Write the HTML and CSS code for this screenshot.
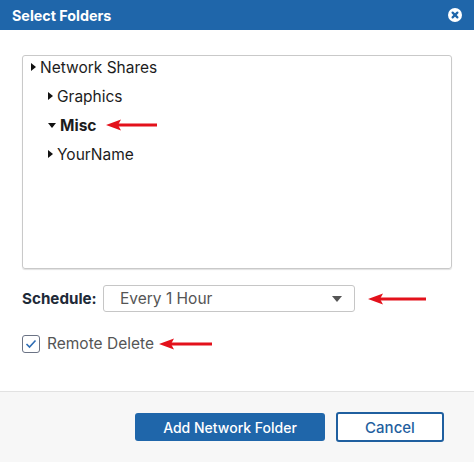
FILE: index.html
```html
<!DOCTYPE html>
<html lang="en">
<head>
    <meta charset="UTF-8">
    <title>Select Folders</title>
    <link rel="stylesheet" href="styles.css">
</head>
<body>
    <div class="dialog">
        <div class="dialog-header">
            <span class="dialog-title">Select Folders</span>
            <span class="close-btn">
                <svg width="14" height="14" viewBox="0 0 14 14">
                    <circle cx="7" cy="7" r="7" fill="#fff"/>
                    <path d="M4.6 4.6 L9.4 9.4 M9.4 4.6 L4.6 9.4" stroke="#1f66aa" stroke-width="2.2" stroke-linecap="round"/>
                </svg>
            </span>
        </div>

        <div class="dialog-body">
            <div class="tree">
                <div class="tree-row">
                    <span class="caret-right"></span>Network Shares
                </div>
                <div class="tree-children">
                    <div class="tree-row">
                        <span class="caret-right"></span>Graphics
                    </div>
                    <div class="tree-row open">
                        <span class="caret-down"></span>Misc
                        <svg class="arrow" width="52" height="12" viewBox="0 0 52 12">
                            <path d="M12 6 H51" stroke="#e3111b" stroke-width="3"/>
                            <path d="M0 6 L15 0.5 L12 6 L15 11.5 Z" fill="#e3111b"/>
                        </svg>
                    </div>
                    <div class="tree-row">
                        <span class="caret-right"></span>YourName
                    </div>
                </div>
            </div>

            <div class="schedule-row">
                <label class="schedule-label">Schedule:</label>
                <div class="select">
                    <span>Every 1 Hour</span>
                    <span class="select-caret"></span>
                </div>
                <svg class="arrow arrow-schedule" width="59" height="12" viewBox="0 0 59 12">
                    <path d="M12 6 H58" stroke="#e3111b" stroke-width="3"/>
                    <path d="M0 6 L15 0.5 L12 6 L15 11.5 Z" fill="#e3111b"/>
                </svg>
            </div>

            <div class="check-row">
                <span class="checkbox">
                    <svg width="12" height="10" viewBox="0 0 12 10">
                        <path d="M1.5 5 L4.5 8 L10.5 1.5" fill="none" stroke="#2e6db4" stroke-width="1.6"/>
                    </svg>
                </span>
                <span class="check-label">Remote Delete</span>
                <svg class="arrow arrow-check" width="54" height="12" viewBox="0 0 54 12">
                    <path d="M12 6 H53" stroke="#e3111b" stroke-width="3"/>
                    <path d="M0 6 L15 0.5 L12 6 L15 11.5 Z" fill="#e3111b"/>
                </svg>
            </div>
        </div>

        <div class="dialog-footer">
            <button class="btn btn-primary">Add Network Folder</button>
            <button class="btn btn-secondary">Cancel</button>
        </div>
    </div>
</body>
</html>
```

FILE: styles.css
```css
body {
    margin: 0;
    font-family: 'Inter', 'Liberation Sans', sans-serif;
    background-color: #fff;
}

.dialog {
    width: 474px;
    height: 462px;
    display: flex;
    flex-direction: column;
}

.dialog-header {
    height: 30px;
    background-color: #1f66aa;
    color: #fff;
    display: flex;
    align-items: center;
    justify-content: space-between;
    padding: 0 12px;
}

.dialog-title {
    font-size: 14.3px;
    font-weight: 700;
}

.close-btn svg {
    display: block;
}

.dialog-body {
    flex: 1;
    padding: 25px 22px 0 22px;
}

.tree {
    height: 214px;
    box-sizing: border-box;
    border: 1px solid #c9c9c9;
    border-radius: 3px;
    box-shadow: 0 1px 1px rgba(0, 0, 0, 0.12);
    padding: 0 8px;
    color: #1c1c1c;
    font-size: 15.5px;
}

.tree-row {
    display: flex;
    align-items: center;
    height: 22px;
    margin-bottom: 7px;
}

.tree-children {
    padding-left: 17px;
}

.tree-row.open {
    font-weight: 700;
}

.caret-right {
    width: 0;
    height: 0;
    border-top: 4px solid transparent;
    border-bottom: 4px solid transparent;
    border-left: 5px solid #111;
    margin-right: 4px;
}

.caret-down {
    width: 0;
    height: 0;
    border-left: 4.5px solid transparent;
    border-right: 4.5px solid transparent;
    border-top: 5px solid #111;
    margin-right: 4px;
}

.arrow {
    display: block;
    margin-left: 10px;
}

.schedule-row {
    display: flex;
    align-items: center;
    margin-top: 16px;
}

.schedule-label {
    font-size: 15.2px;
    font-weight: 700;
    color: #1e2a38;
    width: 81px;
}

.select {
    width: 252px;
    height: 27px;
    box-sizing: border-box;
    border: 1px solid #c6c6c6;
    border-radius: 3px;
    display: flex;
    align-items: center;
    justify-content: space-between;
    padding: 0 12px 0 16px;
    font-size: 15.5px;
    color: #555;
}

.select-caret {
    width: 0;
    height: 0;
    border-left: 5.5px solid transparent;
    border-right: 5.5px solid transparent;
    border-top: 6px solid #555;
}

.arrow-schedule {
    margin-left: 13px;
}

.check-row {
    display: flex;
    align-items: center;
    margin-top: 22px;
}

.checkbox {
    width: 18px;
    height: 18px;
    box-sizing: border-box;
    border: 1.5px solid #6b7385;
    border-radius: 3px;
    display: flex;
    align-items: center;
    justify-content: center;
}

.check-label {
    margin-left: 7px;
    font-size: 15.5px;
    color: #555;
}

.arrow-check {
    margin-left: 5px;
}

.dialog-footer {
    height: 70px;
    background-color: #f7f7f7;
    border-top: 1px solid #e2e2e2;
    display: flex;
    align-items: center;
    justify-content: flex-end;
    gap: 11px;
    padding-right: 30px;
}

.btn {
    font-family: 'Inter', 'Liberation Sans', sans-serif;
    font-size: 15px;
    font-weight: 500;
    border-radius: 3px;
    cursor: pointer;
    box-sizing: border-box;
}

.btn-primary {
    width: 190px;
    height: 28px;
    font-size: 14px;
    background-color: #1f66aa;
    color: #fff;
    border: none;
}

.btn-secondary {
    width: 108px;
    height: 30px;
    background-color: #fff;
    color: #1f5f9f;
    border: 2px solid #1f5f9f;
}
```
